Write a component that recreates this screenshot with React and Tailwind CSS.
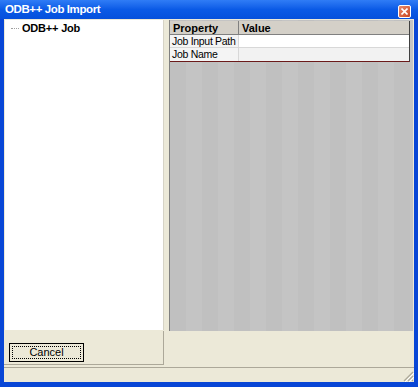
import React from 'react';

const font = { fontFamily: '"Liberation Sans", Arial, sans-serif' };

const TitleBar = () => (
  <div className="h-[19px] flex items-center justify-between pl-[5px] pr-[7px] bg-gradient-to-b from-[#2f7cf6] via-[#0a5ae6] to-[#0550dc]">
    <span className="text-white font-bold text-[11.5px] leading-none tracking-[-0.4px]">ODB++ Job Import</span>
    <div className="w-[13px] h-[13px] mt-[3px] rounded-[2px] border border-white bg-gradient-to-br from-[#e98a6c] to-[#c8451f] flex items-center justify-center">
      <svg width="7" height="7" viewBox="0 0 7 7">
        <path d="M0.5 0.5 L6.5 6.5 M6.5 0.5 L0.5 6.5" stroke="white" strokeWidth="1.6" />
      </svg>
    </div>
  </div>
);

const PropertyGrid = () => {
  const rows = [
    { name: 'Job Input Path', bg: 'bg-white' },
    { name: 'Job Name', bg: 'bg-[#f2f2f2]' },
  ];
  return (
    <div className="w-[240px] border-r border-b border-r-[#404040] border-b-[#6b1a1a] text-[10.5px] tracking-[-0.3px]">
      <div className="flex h-[14px] bg-[#d4d0c8] border-b border-[#808080] font-bold text-[11px] tracking-normal leading-[14px]">
        <div className="w-[69px] pl-[3px] border-r border-[#808080]">Property</div>
        <div className="flex-1 pl-[3px]">Value</div>
      </div>
      {rows.map((r) => (
        <div key={r.name} className="flex h-[13px] border-b border-[#d8d8d8] leading-[13px] last:border-b-0">
          <div className="w-[69px] pl-[2px] bg-[#f4f4f4] border-r border-[#d8d8d8] whitespace-nowrap overflow-hidden">{r.name}</div>
          <div className={`flex-1 ${r.bg}`}></div>
        </div>
      ))}
    </div>
  );
};

export default function App() {
  return (
    <div className="w-[418px] h-[387px] bg-[#0846d6] flex flex-col text-black" style={font}>
      <TitleBar />
      <div className="flex-1 mx-[4px] mb-[5px] bg-[#ece9d8] flex flex-col">
        {/* Main panes */}
        <div className="h-[312px] flex pt-[1px]">
          <div className="w-[159px] ml-[1px] h-[310px] bg-white border-r border-[#d6d3c6]">
            <div className="flex items-center h-[14px] mt-[1px]">
              <div className="w-[8px] ml-[6px] mr-[3px] border-t border-dotted border-[#a0a0a0]"></div>
              <span className="font-bold text-[11px] tracking-[-0.2px]">ODB++ Job</span>
            </div>
          </div>
          <div className="w-[5px]"></div>
          <div className="flex-1 mr-[1px] h-[311px] border-l border-[#808080] pt-[1px] bg-[repeating-linear-gradient(90deg,#c0c0c0_0px,#c0c0c0_16px,#c4c4c4_16px,#c4c4c4_32px)]">
            <PropertyGrid />
          </div>
        </div>
        {/* Bottom buttons */}
        <div className="h-[36px] flex">
          <div className="w-[160px] h-[34px] border-r border-b border-[#aca899] flex items-end pl-[5px] pb-[2px]">
            <button className="w-[75px] h-[19px] border border-black bg-[#ece9d8] p-[2px] text-[11px]">
              <div className="w-full h-full border border-dotted border-black flex items-center justify-center leading-none">
                Cancel
              </div>
            </button>
          </div>
        </div>
        {/* Status bar */}
        <div className="flex-1 border-t border-[#aca899] flex justify-end items-end">
          <svg width="12" height="12" viewBox="0 0 12 12">
            <path d="M11 2 L2 11 M11 6 L6 11 M11 10 L10 11" stroke="#aca899" strokeWidth="1.2" />
            <path d="M12 3 L3 12 M12 7 L7 12" stroke="#ffffff" strokeWidth="1" />
          </svg>
        </div>
      </div>
    </div>
  );
}
